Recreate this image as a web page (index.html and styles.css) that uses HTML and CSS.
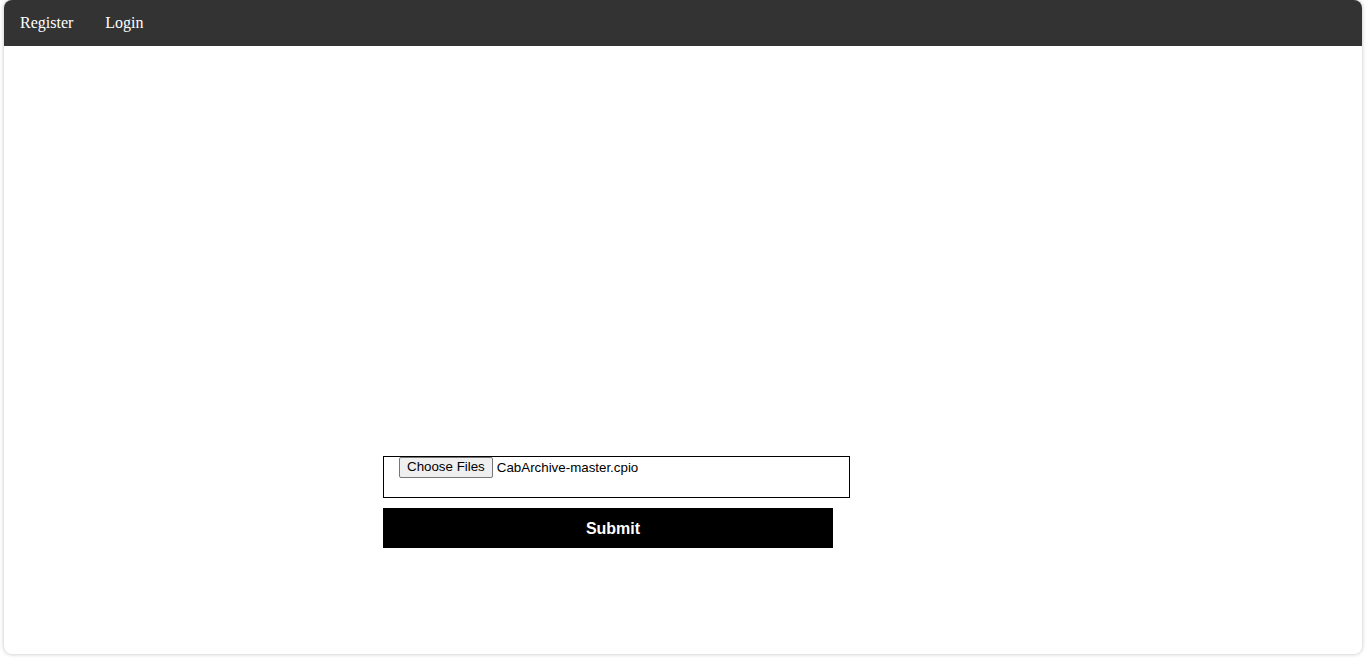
FILE: index.html
```html
<!DOCTYPE html>
<html>
<head>
<meta charset="utf-8">
<link rel="stylesheet" href="styles.css">
</head>
<body>
<div class="card">
  <nav class="topnav">
    <a href="#">Register</a>
    <a href="#">Login</a>
  </nav>
  <main class="content">
    <form class="upload">
      <div class="filebox">
        <span class="filebtn">Choose Files</span>
        <span class="filename">CabArchive-master.cpio</span>
      </div>
      <button type="button" class="submit">Submit</button>
    </form>
  </main>
</div>
</body>
</html>
```

FILE: styles.css
```css
html, body {
  margin: 0;
  padding: 0;
  background: #ffffff;
}
body {
  padding: 0 4px 4px 4px;
  height: 658px;
  box-sizing: border-box;
}
.card {
  height: 654px;
  box-sizing: border-box;
  border-radius: 8px;
  box-shadow: 0 0 4px rgba(0, 0, 0, 0.25);
  background: #fff;
  overflow: hidden;
  display: flex;
  flex-direction: column;
}
.topnav {
  background: #333333;
  height: 46px;
  display: flex;
  align-items: center;
}
.topnav a {
  font-family: "Liberation Serif", "Times New Roman", serif;
  font-size: 16px;
  color: #ffffff;
  text-decoration: none;
  padding: 0 16px;
  line-height: 18px;
}
.content {
  flex: 1;
  padding-top: 410px;
  padding-left: 379px;
}
.upload {
  width: 467px;
}
.filebox {
  box-sizing: border-box;
  width: 467px;
  height: 42px;
  border: 1px solid #000;
  padding: 1px 15px 0 15px;
  display: flex;
  align-items: flex-start;
  font-family: "Liberation Sans", Arial, sans-serif;
  font-size: 13.33px;
  color: #000;
}
.filebtn {
  box-sizing: border-box;
  height: 21px;
  line-height: 18px;
  padding: 0 7px;
  background: #efefef;
  border: 1px solid #767676;
  border-radius: 2px;
  color: #000;
  margin-right: 4px;
  margin-top: -1px;
}
.filename {
  line-height: 19px;
}
.submit {
  display: block;
  margin-top: 10px;
  width: 450px;
  height: 40px;
  background: #000;
  color: #fff;
  border: none;
  padding: 2px 0 0 10px;
  font-family: "Liberation Sans", Arial, sans-serif;
  font-weight: bold;
  font-size: 16px;
}
```
